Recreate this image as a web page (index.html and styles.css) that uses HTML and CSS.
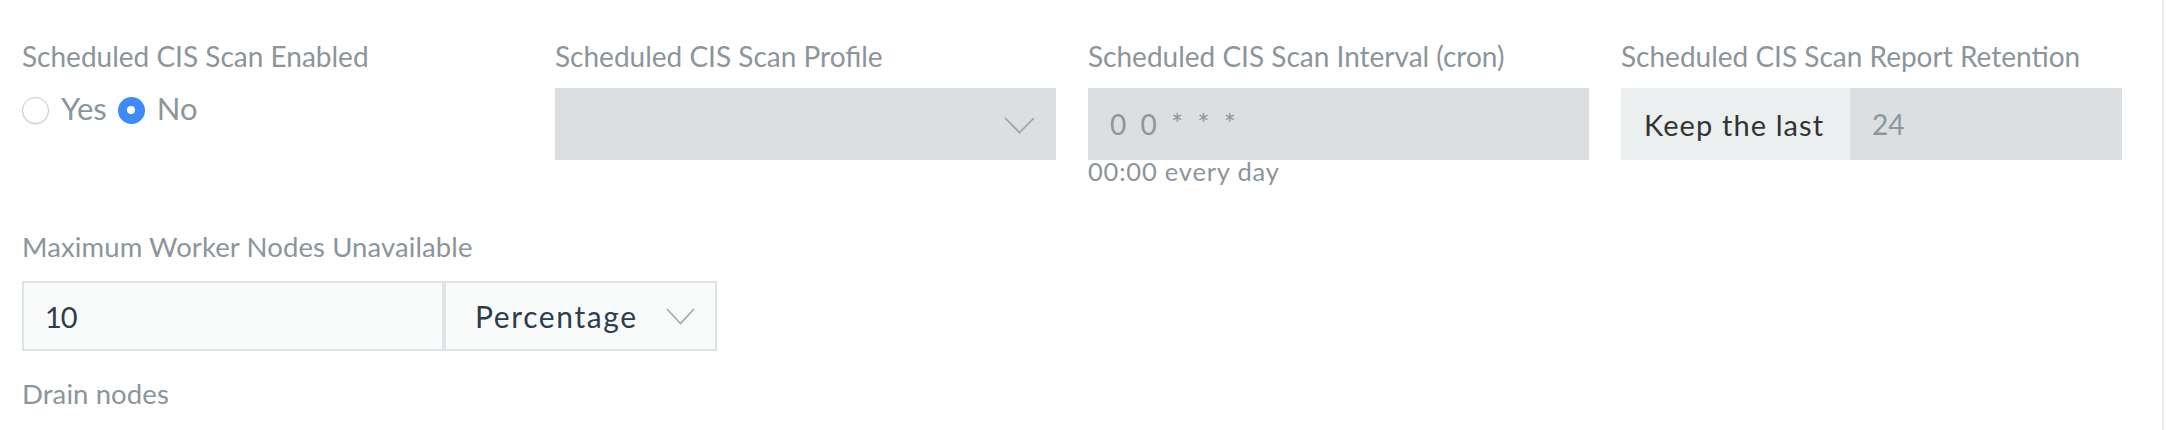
FILE: index.html
```html
<!DOCTYPE html>
<html lang="en">
<head>
<meta charset="utf-8">
<title>Cluster options</title>
<link rel="stylesheet" href="styles.css">
</head>
<body>
<div class="page">
  <div class="grid4">
    <div class="field">
      <div class="label">Scheduled CIS Scan Enabled</div>
      <div class="radios">
        <label class="radio"><span class="dot"></span><span class="rtext">Yes</span></label>
        <label class="radio checked"><span class="dot"></span><span class="rtext">No</span></label>
      </div>
    </div>
    <div class="field">
      <div class="label">Scheduled CIS Scan Profile</div>
      <div class="box disabled select">
        <span class="val"></span>
        <svg class="chev" width="31" height="17" viewBox="0 0 31 17"><polyline points="1,1 15.5,15.5 30,1" fill="none" stroke="#9aa2a7" stroke-width="1.6"/></svg>
      </div>
    </div>
    <div class="field">
      <div class="label">Scheduled CIS Scan Interval (cron)</div>
      <div class="box disabled"><span class="val muted cron">0 0 * * *</span></div>
      <div class="help">00:00 every day</div>
    </div>
    <div class="field">
      <div class="label">Scheduled CIS Scan Report Retention</div>
      <div class="box group">
        <span class="addon">Keep the last</span>
        <span class="gin disabled"><span class="val muted">24</span></span>
      </div>
    </div>
  </div>

  <div class="field row2">
    <div class="label small">Maximum Worker Nodes Unavailable</div>
    <div class="combo">
      <div class="cin">10</div>
      <div class="csel"><span class="pct">Percentage</span>
        <svg class="chev2" width="29" height="17" viewBox="0 0 29 17"><polyline points="1,1 14.5,15.5 28,1" fill="none" stroke="#a0a8ad" stroke-width="1.6"/></svg>
      </div>
    </div>
  </div>

  <div class="label small drain">Drain nodes</div>
</div>
</body>
</html>
```

FILE: styles.css
```css
html, body {
  margin: 0;
  padding: 0;
  background: #ffffff;
}
body {
  font-family: "Lato", "Liberation Sans", sans-serif;
  width: 2166px;
  height: 430px;
  overflow: hidden;
}
.page {
  box-sizing: border-box;
  width: 2164px;
  height: 430px;
  padding: 38px 40px 0 22px;
  border-right: 2px solid #e8ecec;
}
.grid4 {
  display: grid;
  grid-template-columns: repeat(4, 501px);
  column-gap: 32px;
}
.label {
  font-size: 28px;
  line-height: 36px;
  color: #8b959b;
  white-space: nowrap;
  margin-bottom: 14px;
}
.label.small {
  font-size: 27.5px;
  letter-spacing: 0.1px;
}
.radios {
  display: flex;
  align-items: center;
  height: 44px;
  gap: 11px;
}
.radio {
  display: flex;
  align-items: center;
  gap: 12px;
}
.dot {
  box-sizing: border-box;
  width: 27px;
  height: 27px;
  border-radius: 50%;
  border: 1.5px solid #c4c8cb;
  background: #ffffff;
  box-shadow: 0 1px 1px rgba(0,0,0,0.08);
}
.radio.checked .dot {
  border: none;
  background: #3d8bf8;
  box-shadow: none;
  position: relative;
}
.radio.checked .dot::after {
  content: "";
  position: absolute;
  left: 9.5px;
  top: 9.5px;
  width: 8px;
  height: 8px;
  border-radius: 50%;
  background: #ffffff;
}
.rtext {
  font-size: 31px;
  line-height: 38px;
  color: #8b959b;
  margin-bottom: 5px;
}
.box {
  box-sizing: border-box;
  height: 72px;
  display: flex;
  align-items: center;
}
.disabled {
  background: #dcdfe2;
}
.select {
  justify-content: space-between;
  padding: 0 21px 0 22px;
}
.chev {
  margin-top: 2px;
}
.val {
  font-size: 28px;
  line-height: 36px;
  padding-left: 22px;
}
.cron {
  letter-spacing: 0.6px;
  word-spacing: 6px;
}
.muted {
  color: #8d969b;
}
.help {
  font-size: 25.5px;
  line-height: 22px;
  letter-spacing: 0.8px;
  color: #8b959b;
}
.group {
  align-items: stretch;
}
.addon {
  width: 229px;
  box-sizing: border-box;
  background: #eceff0;
  color: #333333;
  font-size: 29px;
  letter-spacing: 1.1px;
  display: flex;
  align-items: center;
  padding-left: 23px;
}
.gin {
  flex: 1;
  display: flex;
  align-items: center;
}
.row2 {
  margin-top: 47px;
}
.row2 .label {
  margin-bottom: 16px;
}
.combo {
  display: flex;
  height: 70px;
  width: 695px;
}
.cin, .csel {
  box-sizing: border-box;
  height: 70px;
  background: #f9fbfb;
  border: 2px solid #dde3e6;
  color: #2d3d4c;
  font-size: 29px;
  display: flex;
  align-items: center;
}
.cin {
  width: 422px;
  padding-left: 21px;
  letter-spacing: -1px;
}
.csel {
  width: 273px;
  padding: 0 20px 0 29px;
  justify-content: space-between;
}
.pct {
  font-size: 30px;
  letter-spacing: 1.6px;
}
.chev2 {
  margin-top: 1px;
}
.drain {
  margin-top: 25px;
}
```
